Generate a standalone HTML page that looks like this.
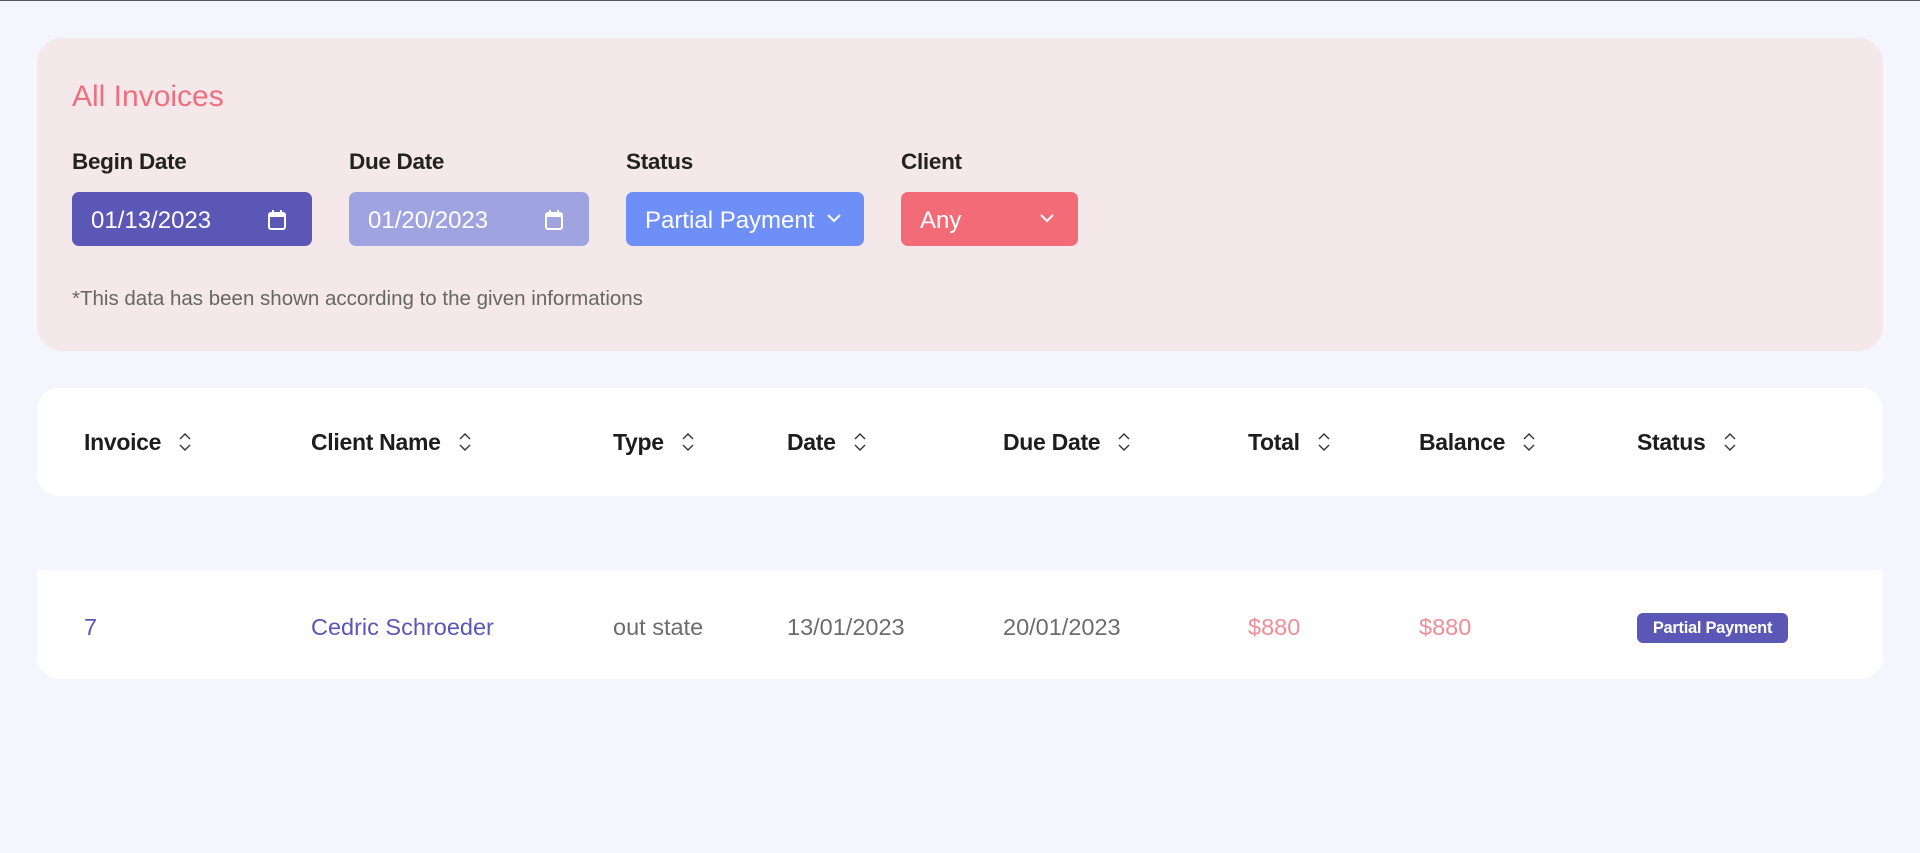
<!DOCTYPE html>
<html><head><meta charset="utf-8"><style>
*{box-sizing:border-box;margin:0;padding:0}
body{width:1920px;height:853px;background:#f5f6fd;font-family:"Liberation Sans",sans-serif;position:relative;overflow:hidden;border-top:1px solid #55566a}
.card{position:absolute;left:37px;width:1846px}
.top{top:37px;height:313px;background:#f5e8ea;border-radius:25px}
.title{position:absolute;left:35px;top:42px;font-size:30px;color:#f06f7e}
.lbl{position:absolute;top:111px;font-size:22.5px;font-weight:bold;color:#222;letter-spacing:-0.3px}
.inp{position:absolute;top:154px;height:54px;border-radius:7px;color:#fff;font-size:24px;padding-left:19px;line-height:58px}
.inp svg{position:absolute;top:17px}
.note{position:absolute;left:35px;top:249px;font-size:20.5px;color:#666}
.hdr{top:387px;height:108px;background:#fff;border-radius:22px}
.h{position:absolute;top:41px;font-size:23px;font-weight:bold;color:#1d1d1d;white-space:nowrap;letter-spacing:-0.3px}
.h svg{vertical-align:middle;margin-left:17px;margin-top:-4px}
.row{top:569px;height:109px;background:#fff;border-radius:0 0 22px 22px}
.c{position:absolute;top:44px;font-size:23.5px;white-space:nowrap}
.badge{position:absolute;left:1600px;top:43px;width:151px;height:30px;background:#5a57b6;color:#fff;border-radius:6px;font-size:16.5px;font-weight:bold;text-align:center;line-height:31px;letter-spacing:-0.3px}
</style></head><body>
<div class="card top">
<div class="title">All Invoices</div>
<div class="lbl" style="left:35px">Begin Date</div>
<div class="lbl" style="left:312px">Due Date</div>
<div class="lbl" style="left:589px">Status</div>
<div class="lbl" style="left:864px">Client</div>
<div class="inp" style="left:35px;width:240px;background:#5a57b6">01/13/2023<svg style="left:195px" width="20" height="22" viewBox="0 0 20 22"><rect x="2" y="4" width="16" height="16" rx="2" fill="none" stroke="#fff" stroke-width="2"/><rect x="2" y="4" width="16" height="4" fill="#fff"/><rect x="5" y="1" width="2" height="4" fill="#fff"/><rect x="13" y="1" width="2" height="4" fill="#fff"/></svg></div>
<div class="inp" style="left:312px;width:240px;background:#9fa3df">01/20/2023<svg style="left:195px" width="20" height="22" viewBox="0 0 20 22"><rect x="2" y="4" width="16" height="16" rx="2" fill="none" stroke="#fff" stroke-width="2"/><rect x="2" y="4" width="16" height="4" fill="#fff"/><rect x="5" y="1" width="2" height="4" fill="#fff"/><rect x="13" y="1" width="2" height="4" fill="#fff"/></svg></div>
<div class="inp" style="left:589px;width:238px;background:#6e8ff7">Partial Payment<svg style="left:200px;top:20px" width="16" height="12" viewBox="0 0 16 12"><path d="M2 3l6 6 6-6" fill="none" stroke="#fff" stroke-width="2"/></svg></div>
<div class="inp" style="left:864px;width:177px;background:#f46b78">Any<svg style="left:138px;top:20px" width="16" height="12" viewBox="0 0 16 12"><path d="M2 3l6 6 6-6" fill="none" stroke="#fff" stroke-width="2"/></svg></div>
<div class="note">*This data has been shown according to the given informations</div>
</div>
<div class="card hdr">
<div class="h" style="left:47px">Invoice<svg width="14" height="24" viewBox="0 0 14 24"><path d="M2 9l5-5 5 5M2 15l5 5 5-5" fill="none" stroke="#333" stroke-width="1.4"/></svg></div>
<div class="h" style="left:274px">Client Name<svg width="14" height="24" viewBox="0 0 14 24"><path d="M2 9l5-5 5 5M2 15l5 5 5-5" fill="none" stroke="#333" stroke-width="1.4"/></svg></div>
<div class="h" style="left:576px">Type<svg width="14" height="24" viewBox="0 0 14 24"><path d="M2 9l5-5 5 5M2 15l5 5 5-5" fill="none" stroke="#333" stroke-width="1.4"/></svg></div>
<div class="h" style="left:750px">Date<svg width="14" height="24" viewBox="0 0 14 24"><path d="M2 9l5-5 5 5M2 15l5 5 5-5" fill="none" stroke="#333" stroke-width="1.4"/></svg></div>
<div class="h" style="left:966px">Due Date<svg width="14" height="24" viewBox="0 0 14 24"><path d="M2 9l5-5 5 5M2 15l5 5 5-5" fill="none" stroke="#333" stroke-width="1.4"/></svg></div>
<div class="h" style="left:1211px">Total<svg width="14" height="24" viewBox="0 0 14 24"><path d="M2 9l5-5 5 5M2 15l5 5 5-5" fill="none" stroke="#333" stroke-width="1.4"/></svg></div>
<div class="h" style="left:1382px">Balance<svg width="14" height="24" viewBox="0 0 14 24"><path d="M2 9l5-5 5 5M2 15l5 5 5-5" fill="none" stroke="#333" stroke-width="1.4"/></svg></div>
<div class="h" style="left:1600px">Status<svg width="14" height="24" viewBox="0 0 14 24"><path d="M2 9l5-5 5 5M2 15l5 5 5-5" fill="none" stroke="#333" stroke-width="1.4"/></svg></div>
</div>
<div class="card row">
<div class="c" style="left:47px;color:#5a57b6">7</div>
<div class="c" style="left:274px;color:#5a57b6">Cedric Schroeder</div>
<div class="c" style="left:576px;color:#6c6c6c">out state</div>
<div class="c" style="left:750px;color:#6c6c6c">13/01/2023</div>
<div class="c" style="left:966px;color:#6c6c6c">20/01/2023</div>
<div class="c" style="left:1211px;color:#ef8d96">$880</div>
<div class="c" style="left:1382px;color:#ef8d96">$880</div>
<div class="badge">Partial Payment</div>
</div>
</body></html>
